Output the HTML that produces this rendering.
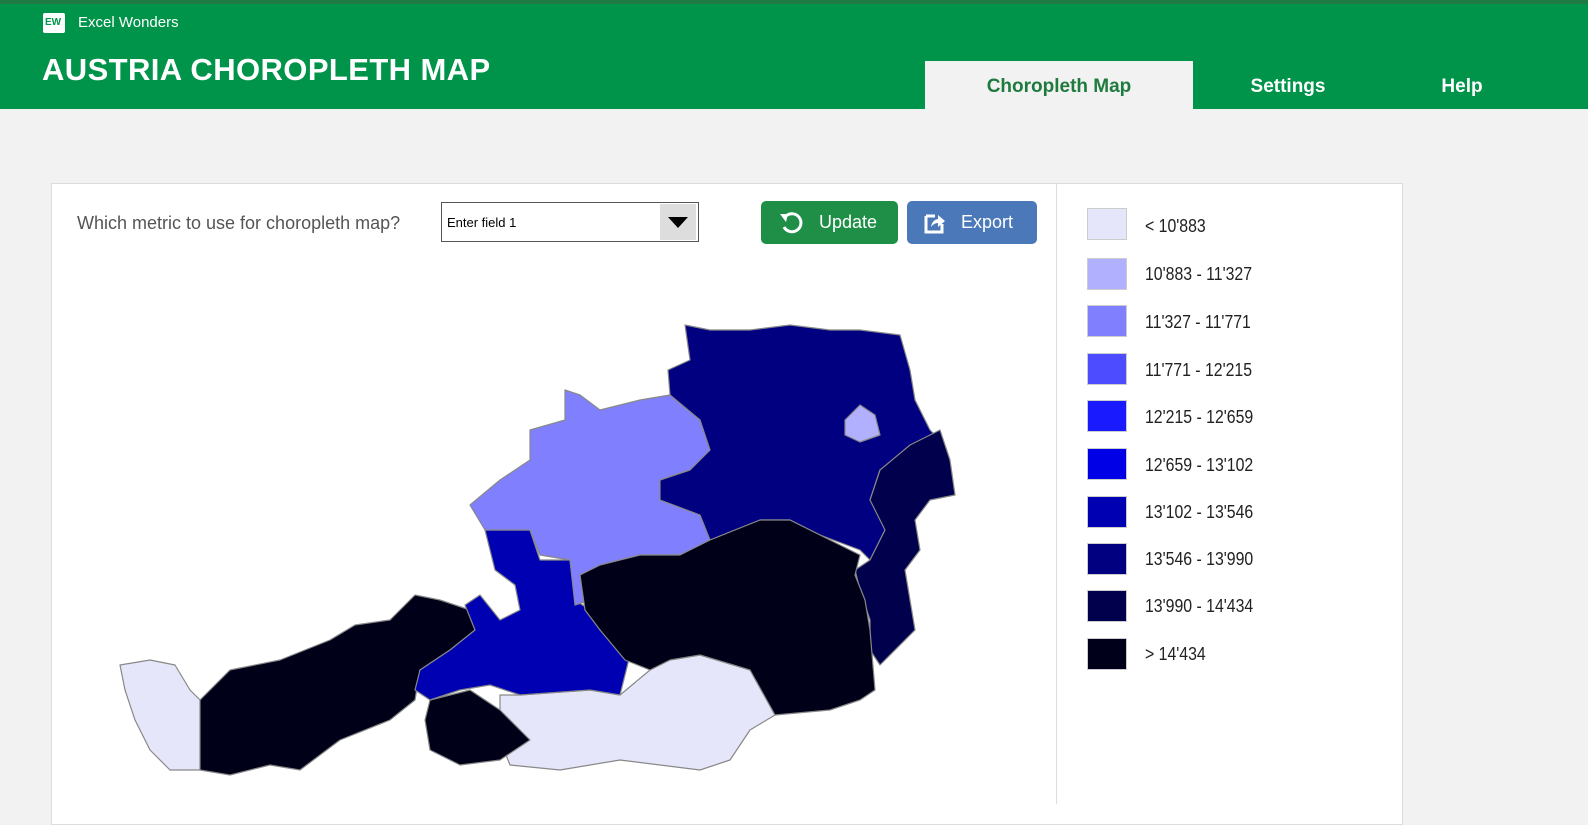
<!DOCTYPE html>
<html><head><style>
body{margin:0;width:1588px;height:802px;overflow:hidden;background:#f2f2f2;font-family:"Liberation Sans",sans-serif;position:relative}
.hdr{position:absolute;left:0;top:0;width:1588px;height:109px;background:#00944a;border-top:4px solid #1f7a45;box-sizing:border-box}
.abs{position:absolute}
.tab{position:absolute;top:61px;height:48px;line-height:52px;text-align:center;font-size:19px;font-weight:bold;color:#fff}
.panel{position:absolute;left:51px;top:183px;width:1350px;height:640px;background:#fff;border:1px solid #ddd}
.sq{position:absolute;left:1087px;width:40px;height:32px;border:1px solid #ccc;box-sizing:border-box}
.lt{position:absolute;left:1145px;font-size:18px;color:#222;transform:scaleX(.88);transform-origin:left}
.btn{position:absolute;top:201px;height:43px;border-radius:5px;color:#fff;font-size:18px;line-height:43px}
</style></head><body>
<div class="hdr"></div>
<div class="abs" style="left:43px;top:13px;width:22px;height:20px;background:#fff;border-radius:2px"></div>
<div class="abs" style="left:45px;top:17px;font-size:10px;font-weight:bold;color:#00944a">EW</div>
<div class="abs" style="left:78px;top:14px;font-size:15px;color:#fff">Excel Wonders</div>
<div class="abs" style="left:42px;top:52px;font-size:31px;font-weight:bold;color:#fff;letter-spacing:0.4px">AUSTRIA CHOROPLETH MAP</div>
<div class="tab" style="left:925px;width:268px;background:#f2f2f2;color:#1e7a3e">Choropleth Map</div>
<div class="tab" style="left:1200px;width:176px">Settings</div>
<div class="tab" style="left:1390px;width:144px">Help</div>
<div class="panel"></div>
<div class="abs" style="left:1056px;top:184px;width:1px;height:620px;background:#ddd"></div>
<div class="abs" style="left:77px;top:213px;font-size:18px;color:#555">Which metric to use for choropleth map?</div>
<div class="abs" style="left:441px;top:202px;width:256px;height:38px;border:1px solid #555;background:#fff"></div>
<div class="abs" style="left:447px;top:215px;font-size:13px;color:#000">Enter field 1</div>
<div class="abs" style="left:660px;top:204px;width:36px;height:36px;background:#ddd"></div>
<div class="abs" style="left:668px;top:217px;width:0;height:0;border-left:10px solid transparent;border-right:10px solid transparent;border-top:11px solid #000"></div>
<div class="btn" style="left:761px;width:137px;background:#1f8f48"><svg class="abs" style="left:17px;top:9px" width="28" height="26" viewBox="0 0 28 26"><path d="M8 6 A9 9 0 1 1 6 17" fill="none" stroke="#fff" stroke-width="3"/><path d="M2 4 L10 4 L8 12 Z" fill="#fff"/></svg><span style="position:absolute;left:58px">Update</span></div>
<div class="btn" style="left:907px;width:130px;background:#4a78b8"><svg class="abs" style="left:16px;top:10px" width="24" height="24" viewBox="0 0 24 24"><path d="M3 5 H12 M3 5 V21 H19 V13" fill="none" stroke="#fff" stroke-width="3"/><path d="M8 16 Q9 9 15 8 V4 L22 10 L15 16 V12 Q11 12 8 16Z" fill="#fff"/></svg><span style="position:absolute;left:54px">Export</span></div>

<svg class="abs" style="left:0;top:0" width="1588" height="802">
<g stroke="#888" stroke-width="1.2" stroke-linejoin="round">
<polygon fill="#e6e6fa" points="120,665 150,660 175,665 190,690 205,705 200,770 170,770 150,750 135,720 125,690"/>
<polygon fill="#000018" points="200,700 230,670 280,660 330,640 355,625 390,620 415,595 440,600 470,610 475,630 450,650 420,670 415,700 390,720 340,740 300,770 270,765 230,775 200,770"/>
<polygon fill="#e6e6fa" points="500,695 520,695 590,690 620,695 650,670 670,660 700,655 750,670 775,715 750,730 730,760 700,770 620,760 560,770 510,765 500,740"/>
<polygon fill="#000018" points="430,700 470,690 500,710 530,740 500,760 460,765 430,750 425,720"/>
<polygon fill="#0000b3" points="485,530 530,530 540,560 570,560 575,600 590,610 600,630 630,655 620,695 590,690 520,695 490,685 460,690 430,700 415,690 420,670 450,650 475,630 465,605 480,595 500,620 520,610 515,585 495,570"/>
<polygon fill="#8080ff" points="470,505 500,480 530,460 530,430 565,420 565,390 580,395 600,410 640,400 670,395 700,420 710,450 690,470 660,480 660,500 700,515 710,540 680,555 640,555 600,570 590,600 575,605 570,560 540,555 530,530 485,530"/>
<polygon fill="#000080" points="685,325 710,330 750,330 790,325 830,330 860,330 900,335 910,370 915,400 930,430 940,440 915,450 880,470 870,500 890,520 880,540 870,560 860,550 820,535 790,520 760,520 710,540 700,515 660,500 660,480 690,470 710,450 700,420 670,395 668,370 690,360"/>
<polygon fill="#b0b0ff" points="845,420 860,405 875,415 880,435 860,442 845,435"/>
<polygon fill="#00004d" points="880,470 910,445 940,430 950,460 955,495 930,500 915,520 920,550 905,570 910,600 915,630 880,665 870,650 870,620 860,590 855,570 870,560 885,530 870,500"/>
<polygon fill="#000018" points="580,575 600,565 640,555 680,555 710,540 760,520 790,520 820,535 860,555 855,575 865,600 870,630 875,690 860,700 830,710 775,715 750,670 700,655 670,660 650,670 625,660 600,630 585,610"/>
</g></svg>

<div class="sq" style="top:208px;background:#e6e6fa"></div><div class="lt" style="top:216px">&lt; 10'883</div>
<div class="sq" style="top:258px;background:#b0b0ff"></div><div class="lt" style="top:264px">10'883 - 11'327</div>
<div class="sq" style="top:305px;background:#8080ff"></div><div class="lt" style="top:312px">11'327 - 11'771</div>
<div class="sq" style="top:353px;background:#4d4dff"></div><div class="lt" style="top:360px">11'771 - 12'215</div>
<div class="sq" style="top:400px;background:#1a1aff"></div><div class="lt" style="top:407px">12'215 - 12'659</div>
<div class="sq" style="top:448px;background:#0000e6"></div><div class="lt" style="top:455px">12'659 - 13'102</div>
<div class="sq" style="top:496px;background:#0000b3"></div><div class="lt" style="top:502px">13'102 - 13'546</div>
<div class="sq" style="top:543px;background:#000080"></div><div class="lt" style="top:549px">13'546 - 13'990</div>
<div class="sq" style="top:590px;background:#00004d"></div><div class="lt" style="top:596px">13'990 - 14'434</div>
<div class="sq" style="top:638px;background:#00001a"></div><div class="lt" style="top:644px">&gt; 14'434</div>
</body></html>
